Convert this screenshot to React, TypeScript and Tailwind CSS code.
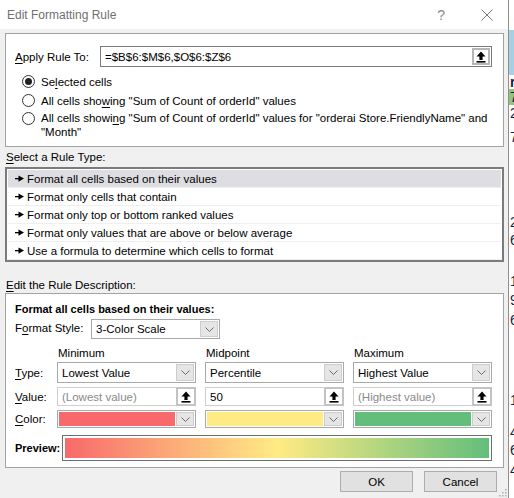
import React from "react";

const U = ({ children }: { children: React.ReactNode }) => (
  <span className="underline underline-offset-[2px] decoration-[1px]">{children}</span>
);

function UpArrow() {
  return (
    <svg width="10" height="12" viewBox="0 0 10 12">
      <path d="M5 0.5 L9.5 5.5 H6.6 V9 H3.4 V5.5 H0.5 Z" fill="#000" />
      <rect x="0.5" y="10" width="9" height="1.6" fill="#000" />
    </svg>
  );
}

function Chevron() {
  return (
    <svg width="9" height="5" viewBox="0 0 9 5">
      <path d="M0.5 0.5 L4.5 4.5 L8.5 0.5" fill="none" stroke="#6b6b6b" strokeWidth="1" />
    </svg>
  );
}

function Bullet() {
  return (
    <svg width="9" height="7" viewBox="0 0 9 7" className="shrink-0">
      <rect x="0" y="3" width="4" height="1.3" fill="#000" />
      <path d="M3.5 0.5 L9 3.6 L3.5 6.7 Z" fill="#000" />
    </svg>
  );
}

function Radio({ checked }: { checked?: boolean }) {
  return (
    <div className="w-[13px] h-[13px] rounded-full border border-[#333] bg-white flex items-center justify-center shrink-0">
      {checked && <div className="w-[7px] h-[7px] rounded-full bg-[#222]" />}
    </div>
  );
}

function DropBtn({ h = "h-[17px]" }: { h?: string }) {
  return (
    <div className={`ml-auto mr-[1px] w-[18px] ${h} bg-[#e5e5e5] border border-[#cdcdcd] flex items-center justify-center shrink-0`}>
      <Chevron />
    </div>
  );
}

function TypeSelect({ text }: { text: string }) {
  return (
    <div className="w-[139px] h-[21px] bg-white border border-[#a9a9a9] flex items-center pl-[4px]">
      <span>{text}</span>
      <DropBtn />
    </div>
  );
}

function ValueInput({ text, placeholder }: { text: string; placeholder?: boolean }) {
  return (
    <div className="w-[139px] h-[19px] bg-white border border-[#cfcfcf] flex items-center pl-[4px]">
      <span className={placeholder ? "text-[#8a8a8a]" : "text-black"}>{text}</span>
      <div className="ml-auto w-[20px] h-[19px] border-2 border-[#c3c3c3] bg-white flex items-center justify-center shrink-0 -mr-[1px]">
        <UpArrow />
      </div>
    </div>
  );
}

function ColorSelect({ color }: { color: string }) {
  return (
    <div className="w-[139px] h-[18px] bg-white border border-[#a9a9a9] flex items-center pl-[1px]">
      <div className={`flex-1 h-[14px] ${color}`} />
      <div className="ml-[1px] mr-[1px] w-[18px] h-[14px] bg-[#e5e5e5] border border-[#cdcdcd] flex items-center justify-center shrink-0">
        <Chevron />
      </div>
    </div>
  );
}

const ruleTypes = [
  "Format all cells based on their values",
  "Format only cells that contain",
  "Format only top or bottom ranked values",
  "Format only values that are above or below average",
  "Use a formula to determine which cells to format",
];

const stripRows: { h: number; c?: string; bg?: string; bold?: boolean }[] = [
  { h: 30, bg: "bg-white" },
  { h: 45, bg: "bg-[#a7d1e2]" },
  { h: 14, c: "r", bold: true },
  { h: 16, c: "7", bg: "bg-[#93c47d]" },
  { h: 16, c: "2" },
  { h: 8 },
  { h: 16, c: "7" },
  { h: 69 },
  { h: 16, c: "2" },
  { h: 2 },
  { h: 16, c: "6" },
  { h: 25 },
  { h: 16, c: "1" },
  { h: 3 },
  { h: 16, c: "9" },
  { h: 4 },
  { h: 16, c: "6" },
  { h: 64 },
  { h: 16, c: "1" },
  { h: 16 },
  { h: 16, c: "4" },
  { h: 2 },
  { h: 16, c: "6" },
  { h: 4 },
  { h: 16, c: "4" },
  { h: 20 },
];

export default function App() {
  return (
    <div className="w-[514px] h-[498px] flex bg-white overflow-hidden font-['Liberation_Sans',Arial,sans-serif] text-[11.5px] leading-[14px] text-black">
      {/* Dialog */}
      <div className="w-[509px] h-full flex flex-col border-r border-[#8f8f8f] bg-[#f0f0f0] relative shrink-0">
        {/* Title bar */}
        <div className="h-[29px] bg-white flex items-center pl-[7px] pr-[15px] shrink-0">
          <span className="text-[12px] text-[#707070]">Edit Formatting Rule</span>
          <span className="ml-auto text-[14px] text-[#8a8a8a] mr-[36px]">?</span>
          <svg width="12" height="12" viewBox="0 0 12 12">
            <path d="M0.5 0.5 L11.5 11.5 M11.5 0.5 L0.5 11.5" stroke="#7a7a7a" strokeWidth="1" />
          </svg>
        </div>

        {/* Body */}
        <div className="flex-1 flex flex-col pl-[5px] pr-[4px]">
          {/* Apply rule group */}
          <div className="mt-[4px] h-[114px] bg-white border border-[#a3a3a3] pl-[9px] pr-[10px] pt-[12px] shrink-0">
            <div className="flex items-center h-[21px]">
              <span className="w-[85px] shrink-0">
                <U>A</U>pply Rule To:
              </span>
              <div className="w-[392px] h-[21px] border border-[#7a7a7a] bg-white flex items-center pl-[4px]">
                <span>=$B$6:$M$6,$O$6:$Z$6</span>
                <div className="ml-auto mr-[1px] w-[18px] h-[17px] border-2 border-[#b6b6b6] bg-white flex items-center justify-center">
                  <UpArrow />
                </div>
              </div>
            </div>
            <div className="mt-[5px] pl-[7px]">
              <div className="flex items-center h-[19px] gap-[6px]">
                <Radio checked />
                <span>
                  Se<U>l</U>ected cells
                </span>
              </div>
              <div className="flex items-center h-[19px] gap-[6px]">
                <Radio />
                <span>
                  All cells sho<U>w</U>ing "Sum of Count of orderId" values
                </span>
              </div>
              <div className="flex items-start gap-[6px] pt-[1px]">
                <div className="mt-[1px]">
                  <Radio />
                </div>
                <span className="whitespace-nowrap">
                  All cells showi<U>n</U>g "Sum of Count of orderId" values for "orderai Store.FriendlyName" and
                  <br />
                  "Month"
                </span>
              </div>
            </div>
          </div>

          {/* Select rule type */}
          <div className="mt-[3px] pl-[1px] h-[14px]">
            <U>S</U>elect a Rule Type:
          </div>
          <div className="mt-[3px] h-[95px] border-2 border-[#7b7b7b] bg-white p-[1px] overflow-hidden shrink-0">
            {ruleTypes.map((t, i) => (
              <div
                key={t}
                className={`h-[18px] border-b border-[#efefef] flex items-center pl-[7px] gap-[3px] ${
                  i === 0 ? "bg-[#dedee2]" : "bg-white"
                }`}
              >
                <Bullet />
                <span>{t}</span>
              </div>
            ))}
          </div>

          {/* Edit rule description */}
          <div className="mt-[16px] pl-[1px] h-[14px]">
            <U>E</U>dit the Rule Description:
          </div>
          <div className="mt-[1px] h-[175px] bg-white border border-[#a3a3a3] pl-[9px] pt-[8px] shrink-0">
            <div className="font-bold text-[11px] h-[14px]">Format all cells based on their values:</div>
            <div className="mt-[3px] flex items-center h-[20px]">
              <span className="w-[76px] shrink-0 -mt-[3px]">
                F<U>o</U>rmat Style:
              </span>
              <div className="w-[129px] h-[20px] bg-white border border-[#a9a9a9] flex items-center pl-[4px]">
                <span>3-Color Scale</span>
                <DropBtn h="h-[16px]" />
              </div>
            </div>
            <div className="mt-[7px] flex h-[14px]">
              <div className="w-[42px] shrink-0" />
              <div className="flex gap-[9px]">
                <div className="w-[139px] pl-[1px]">Minimum</div>
                <div className="w-[139px] pl-[1px]">Midpoint</div>
                <div className="w-[139px] pl-[1px]">Maximum</div>
              </div>
            </div>
            <div className="mt-[2px] flex items-center h-[21px]">
              <span className="w-[42px] shrink-0">
                <U>T</U>ype:
              </span>
              <div className="flex gap-[9px]">
                <TypeSelect text="Lowest Value" />
                <TypeSelect text="Percentile" />
                <TypeSelect text="Highest Value" />
              </div>
            </div>
            <div className="mt-[4px] flex items-center h-[19px]">
              <span className="w-[42px] shrink-0">
                <U>V</U>alue:
              </span>
              <div className="flex gap-[9px]">
                <ValueInput text="(Lowest value)" placeholder />
                <ValueInput text="50" />
                <ValueInput text="(Highest value)" placeholder />
              </div>
            </div>
            <div className="mt-[4px] flex items-center h-[18px]">
              <span className="w-[42px] shrink-0">
                <U>C</U>olor:
              </span>
              <div className="flex gap-[9px]">
                <ColorSelect color="bg-[#f8696b]" />
                <ColorSelect color="bg-[#ffeb84]" />
                <ColorSelect color="bg-[#63be7b]" />
              </div>
            </div>
            <div className="mt-[7px] flex items-center h-[26px]">
              <span className="w-[47px] shrink-0 font-bold text-[11px]">Preview:</span>
              <div className="w-[430px] h-[26px] border border-[#6e6e6e] bg-white p-[2px]">
                <div className="w-full h-full bg-[linear-gradient(to_right,#f8696b_0%,#ffeb84_50%,#63be7b_100%)]" />
              </div>
            </div>
          </div>

          {/* Buttons */}
          <div className="mt-[3px] flex justify-end gap-[11px] pr-[7px]">
            <div className="w-[73px] h-[21px] bg-[#e1e1e1] border border-[#adadad] flex items-center justify-center">
              OK
            </div>
            <div className="w-[73px] h-[21px] bg-[#e1e1e1] border border-[#adadad] flex items-center justify-center">
              Cancel
            </div>
          </div>
        </div>

        {/* resize grip */}
        <svg className="absolute right-[1px] bottom-[1px]" width="10" height="10" viewBox="0 0 10 10">
          {[
            [8, 2],
            [5, 5],
            [8, 5],
            [2, 8],
            [5, 8],
            [8, 8],
          ].map(([x, y]) => (
            <rect key={`${x}-${y}`} x={x} y={y} width="1.5" height="1.5" fill="#b0b0b0" />
          ))}
        </svg>
      </div>

      {/* Background spreadsheet strip */}
      <div className="w-[5px] h-full flex flex-col overflow-hidden bg-white">
        {stripRows.map((r, i) => (
          <div
            key={i}
            className={`shrink-0 overflow-hidden text-[14px] leading-[16px] text-[#1b1b3a] pl-[1px] flex items-center ${
              r.bg ?? "bg-white"
            } ${r.bold ? "font-bold" : ""}`}
            style={{ height: r.h }}
          >
            {r.c ?? ""}
          </div>
        ))}
      </div>
    </div>
  );
}
